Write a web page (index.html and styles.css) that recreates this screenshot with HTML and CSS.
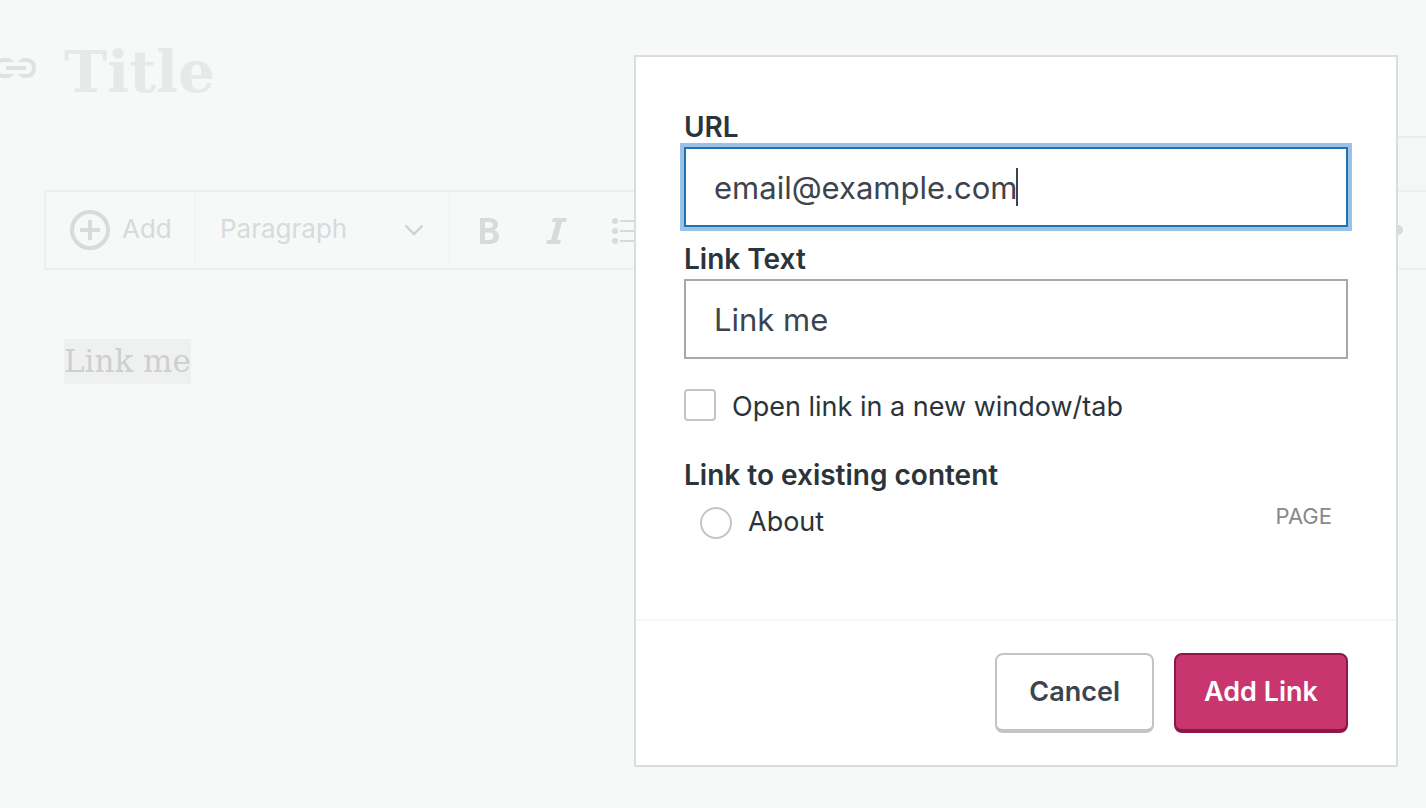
FILE: index.html
```
<!DOCTYPE html>
<html lang="en">
  <head>
    <meta charset="UTF-8">
    <meta name="viewport" content="width=device-width, initial-scale=1.0">
    <title>Add Link</title>
    <link rel="stylesheet" href="styles.css">
  </head>

  <body>
    <main class="editor">
      <div class="title-row">
        <button class="icon-button" aria-label="Permalink">
          <svg class="link-icon" width="44" height="24" viewBox="0 0 44 24" fill="currentColor">
            <path d="M22 18 H12 Q6 18 6 12 T12 6 H22 Q19 2 14 2 H12 Q2 2 2 12 T12 22 H14 Q19 22 22 18 Z" />
            <path d="M26 18 H34 Q40 18 40 12 T34 6 H26 Q29 2 34 2 Q44 2 44 12 T34 22 Q29 22 26 18 Z" />
            <path d="M14 10 H34 V14 H14 Z" />
          </svg>
        </button>
        <h1 class="title">Title</h1>
      </div>

      <div class="mode-row">
        <div class="mode-tabs"></div>
      </div>

      <div class="toolbar">
        <button class="tool add-tool">
          <svg width="40" height="40" viewBox="0 0 40 40" fill="none" stroke="currentColor" stroke-width="4">
            <circle cx="20" cy="20" r="18" />
            <path d="M20 10 V30 M10 20 H30" />
          </svg>
          <span class="tool-text">Add</span>
        </button>
        <button class="tool format-tool">
          <span class="tool-text">Paragraph</span>
          <svg class="chevron" width="20" height="14" viewBox="0 0 20 14" fill="none" stroke="currentColor" stroke-width="2.400">
            <path d="M1.500 2.500 L10 11 L18.500 2.500" />
          </svg>
        </button>
        <div class="tool-group">
          <button class="tool icon-tool" aria-label="Bold">
            <svg width="40" height="40" viewBox="0 0 40 40" fill="currentColor" fill-rule="evenodd">
              <path d="M12 8 H21 C27 8 30 10.500 30 14.500 C30 17.500 28 19.500 25.500 20 C29 20.700 31 23 31 26.500 C31 31.500 27 34 21 34 H12 Z M17 12 V18 H21 C23.500 18 25 17 25 15 C25 13 23.500 12 21 12 Z M17 22.500 V30 H21 C24 30 25.500 28.500 25.500 26 C25.500 24 24 22.500 21 22.500 Z" />
            </svg>
          </button>
          <button class="tool icon-tool" aria-label="Italic">
            <svg width="40" height="40" viewBox="0 0 40 40" fill="currentColor">
              <path d="M17 8 H31 L30 12 H26 L21 30 H25 L24 34 H10 L11 30 H15 L20 12 H16 Z" />
            </svg>
          </button>
          <button class="tool icon-tool" aria-label="Bulleted list">
            <svg width="40" height="40" viewBox="0 0 40 40" fill="currentColor">
              <circle cx="11" cy="11" r="3" />
              <circle cx="11" cy="21" r="3" />
              <circle cx="11" cy="31" r="3" />
              <path d="M16 10 H36 V12 H16 Z M16 20 H36 V22 H16 Z M16 30 H36 V32 H16 Z" />
            </svg>
          </button>
        </div>
        <button class="tool more-tool" aria-label="Toggle advanced">
          <svg width="40" height="12" viewBox="0 0 40 12" fill="currentColor">
            <circle cx="6" cy="6" r="5" />
            <circle cx="19" cy="6" r="5" />
            <circle cx="32" cy="6" r="5" />
          </svg>
        </button>
      </div>

      <p class="content"><span class="selected">Link me</span></p>
    </main>

    <div class="backdrop">
      <form class="dialog" role="dialog" aria-label="Add link">
        <div class="dialog-body">
          <label class="label" for="url">URL</label>
          <div class="field">
            <input class="text-input is-focused" id="url" type="text" value="email@example.com">
            <span class="caret"></span>
          </div>

          <label class="label" for="link-text">Link Text</label>
          <div class="field">
            <input class="text-input" id="link-text" type="text" value="Link me">
          </div>

          <label class="check-row">
            <input class="checkbox" type="checkbox">
            <span class="check-text">Open link in a new window/tab</span>
          </label>

          <h2 class="label">Link to existing content</h2>
          <div class="results">
            <label class="result">
              <input class="radio" type="radio" name="existing">
              <span class="result-title">About</span>
              <span class="result-type">PAGE</span>
            </label>
          </div>
        </div>

        <div class="dialog-footer">
          <button class="button" type="button">Cancel</button>
          <button class="button primary" type="button">Add Link</button>
        </div>
      </form>
    </div>
  </body>
</html>
```
FILE: styles.css
```
* {
  box-sizing: border-box;
}

body {
  margin: 0;
  min-height: 100vh;
  overflow: hidden;
  background-color: #f7f9f8;
  color: #2b343a;
  font-family: Inter, "Liberation Sans", sans-serif;
  font-size: 27px;
}

button,
input {
  font-family: inherit;
  margin: 0;
}

/* faded editor behind the dialog */
.editor {
  color: #d8dadb;
  padding-top: 32px;
}

.title-row {
  display: flex;
  align-items: center;
  height: 80px;
  padding-right: 64px;
}

.icon-button {
  display: flex;
  width: 64px;
  padding: 0;
  border: none;
  background: none;
  color: #dfe1e2;
}

.link-icon {
  margin-left: -8px;
  margin-top: -8px;
}

.title {
  margin: 0;
  color: #e6e8ea;
  font-family: "DejaVu Serif", serif;
  font-size: 58px;
  font-weight: bold;
}

.mode-row {
  display: flex;
  justify-content: flex-end;
  margin-top: 24px;
}

.mode-tabs {
  width: 240px;
  height: 54px;
  border-top: 2px solid #ebedec;
  background-color: #f5f7f6;
}

.toolbar {
  display: flex;
  height: 80px;
  margin-left: 44px;
  border: 2px solid #eef0f0;
  border-right: none;
}

.tool {
  display: flex;
  align-items: center;
  padding: 0;
  border: none;
  background: none;
  color: #d8dadb;
  font-size: 26px;
}

.tool-text {
  padding-bottom: 4px;
}

.add-tool {
  gap: 12px;
  width: 150px;
  padding-left: 24px;
  border-right: 2px solid #f4f6f6;
}

.format-tool {
  justify-content: space-between;
  width: 254px;
  padding: 0 24px;
  border-right: 2px solid #f4f6f6;
}

.chevron {
  color: #ced2d6;
}

.tool-group {
  display: flex;
  gap: 28px;
  padding-left: 18px;
}

.icon-tool {
  width: 40px;
}

.more-tool {
  margin-left: auto;
  margin-right: 20px;
}

.content {
  margin: 67px 64px;
  color: #cdcfd0;
  font-family: "DejaVu Serif", serif;
  font-size: 31px;
  line-height: 48px;
}

.selected {
  display: inline-block;
  line-height: 45px;
  background-color: #eff1f0;
}

/* dialog */
.backdrop {
  position: fixed;
  inset: 0;
  display: flex;
  justify-content: flex-end;
  align-items: flex-start;
  padding: 55px 28px;
}

.dialog {
  width: 764px;
  max-width: 100%;
  border: 2px solid #dadddd;
  background-color: white;
}

.dialog-body {
  padding: 48px 48px 16px;
}

.label {
  display: block;
  margin: 0;
  padding-top: 2px;
  font-size: 28px;
  font-weight: 600;
  line-height: 40px;
}

.field {
  position: relative;
  margin-bottom: 10px;
}

.text-input {
  display: block;
  width: 100%;
  height: 80px;
  padding: 0 28px;
  border: 2px solid #a8a8ab;
  border-radius: 0;
  outline: none;
  background-color: white;
  color: #3d444d;
  font-size: 31px;
}

.is-focused {
  border-color: #2271b1;
  box-shadow: 0 0 0 4px #9cc1e6;
}

.caret {
  position: absolute;
  top: 21px;
  left: 332px;
  width: 2px;
  height: 38px;
  background-color: #3d444d;
}

.check-row {
  display: flex;
  align-items: center;
  gap: 16px;
  margin: 25px 0 27px;
  line-height: 38px;
}

.check-text {
  padding-top: 4px;
}

.checkbox,
.radio {
  appearance: none;
  flex: none;
  width: 32px;
  height: 32px;
  border: 2px solid #c3c4c7;
  border-radius: 4px;
  background-color: white;
}

.radio {
  border-radius: 50%;
}

.results {
  min-height: 108px;
  padding: 7px 16px;
}

.result {
  display: flex;
  align-items: center;
  gap: 16px;
  line-height: 40px;
}

.result-title {
  padding-bottom: 2px;
}

.result-type {
  align-self: flex-start;
  margin-left: auto;
  color: #87898d;
  font-size: 22px;
  line-height: 28px;
}

.dialog-footer {
  display: flex;
  justify-content: flex-end;
  gap: 20px;
  padding: 32px 48px;
  border-top: 2px solid #f5f6f6;
}

.button {
  height: 80px;
  padding: 0 32px 2px;
  border: 2px solid #c3c4c7;
  border-bottom-width: 4px;
  border-radius: 8px;
  background-color: white;
  color: #3d444d;
  font-size: 27px;
  font-weight: 600;
}

.primary {
  padding: 0 28px 2px;
  border-color: #8c1749;
  background-color: #c9356e;
  color: white;
}
```
